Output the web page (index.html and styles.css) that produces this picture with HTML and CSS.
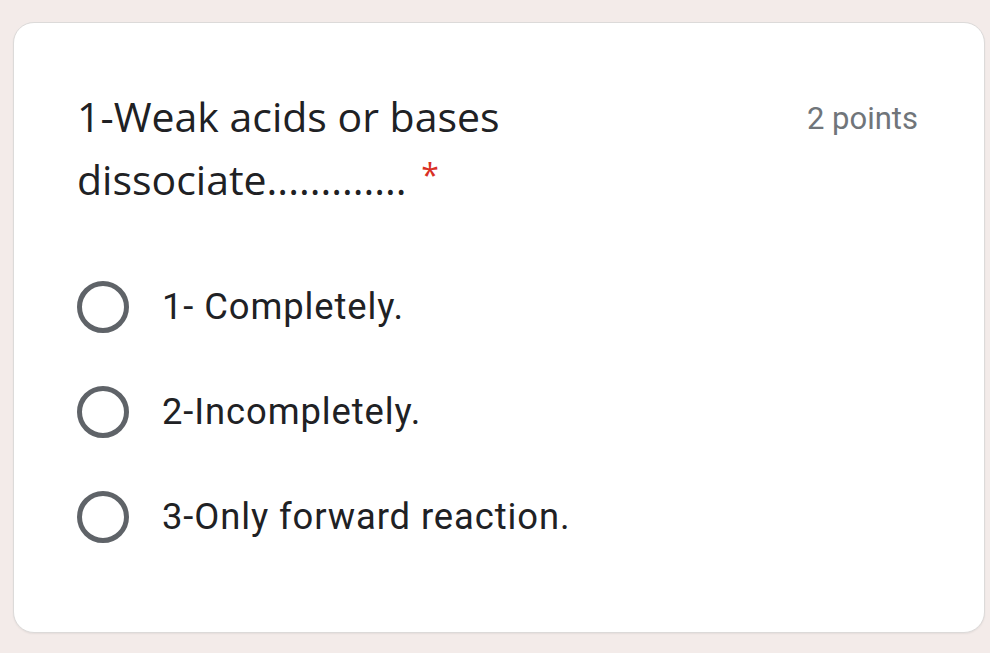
FILE: index.html
```html
<!DOCTYPE html>
<html>
<head>
<meta charset="utf-8">
<link rel="stylesheet" href="styles.css">
</head>
<body>
<div class="card">
  <div class="head">
    <div class="question">1-Weak acids or bases dissociate............. <span class="req">*</span></div>
    <div class="points">2 points</div>
  </div>
  <div class="options">
    <div class="option">
      <svg class="radio" width="52" height="52" viewBox="0 0 52 52"><circle cx="26" cy="26" r="23.5" fill="none" stroke="#5f6368" stroke-width="5"/></svg>
      <span class="label">1- Completely.</span>
    </div>
    <div class="option">
      <svg class="radio" width="52" height="52" viewBox="0 0 52 52"><circle cx="26" cy="26" r="23.5" fill="none" stroke="#5f6368" stroke-width="5"/></svg>
      <span class="label">2-Incompletely.</span>
    </div>
    <div class="option">
      <svg class="radio" width="52" height="52" viewBox="0 0 52 52"><circle cx="26" cy="26" r="23.5" fill="none" stroke="#5f6368" stroke-width="5"/></svg>
      <span class="label">3-Only forward reaction.</span>
    </div>
  </div>
</div>
</body>
</html>
```
FILE: styles.css
```css
html, body {
  margin: 0;
  padding: 0;
  background: #f3ebe9;
}
body {
  padding: 22px 5px 0 13px;
  width: 990px;
  height: 653px;
  box-sizing: border-box;
  overflow: hidden;
}
.card {
  box-sizing: border-box;
  width: 972px;
  height: 611px;
  background: #ffffff;
  border: 1px solid #dcdad9;
  border-radius: 21px;
  padding: 62px 66px 0 63px;
  box-shadow: 0 1px 2px rgba(0,0,0,0.06);
}
.head {
  display: flex;
  align-items: flex-start;
}
.question {
  flex: 1;
  font-family: "Open Sans", sans-serif;
  font-size: 41px;
  line-height: 63px;
  color: #202124;
  padding-right: 20px;
}
.req {
  display: inline-block;
  color: #d93025;
  font-size: 32px;
  line-height: 1;
  vertical-align: 8px;
  margin-left: 4px;
}
.points {
  font-family: Roboto, sans-serif;
  font-size: 31px;
  line-height: 63px;
  margin-top: 2px;
  color: #70757a;
}
.options {
  margin-top: 43px;
  display: flex;
  flex-direction: column;
}
.option {
  height: 105px;
  display: flex;
  align-items: center;
}
.radio {
  flex: none;
  margin-right: 33px;
}
.label {
  font-family: Roboto, sans-serif;
  font-size: 36.4px;
  color: #202124;
  letter-spacing: 0.9px;
}
```
